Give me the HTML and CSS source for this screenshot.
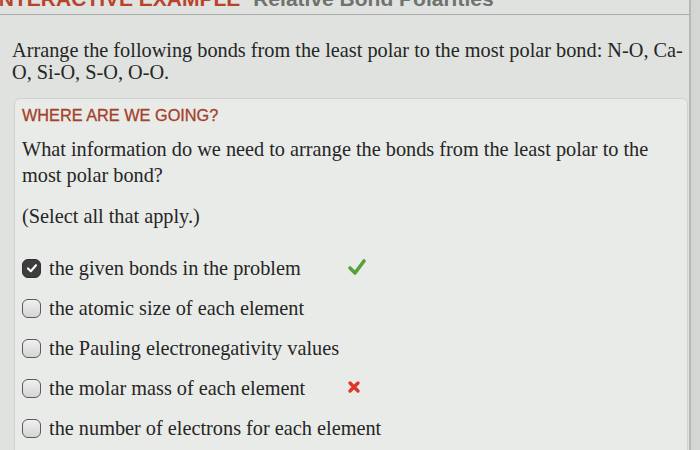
FILE: index.html
```html
<!DOCTYPE html>
<html>
<head>
<meta charset="utf-8">
<link rel="stylesheet" href="styles.css">
</head>
<body>
<div class="page">
  <div class="header">
    <div class="title"><span class="brand">INTERACTIVE EXAMPLE</span> <span class="topic">Relative Bond Polarities</span></div>
  </div>
  <div class="content">
    <p class="question">Arrange the following bonds from the least polar to the most polar bond: N-O, Ca-<br>O, Si-O, S-O, O-O.</p>
    <div class="box">
      <div class="box-title">WHERE ARE WE GOING?</div>
      <p class="prompt">What information do we need to arrange the bonds from the least polar to the most polar bond?</p>
      <p class="hint">(Select all that apply.)</p>
      <ul class="options">
        <li class="option">
          <span class="cb checked"><svg viewBox="0 0 20 20" width="20" height="20"><path d="M5 10.5 L8.5 14 L15 6.5" fill="none" stroke="#fff" stroke-width="2.6" stroke-linecap="round" stroke-linejoin="round"/></svg></span>
          <span class="label">the given bonds in the problem</span>
          <span class="mark"><svg viewBox="0 0 20 18" width="20" height="18"><path d="M3 10 L8 15 L17 3" fill="none" stroke="#5aa03a" stroke-width="3.6" stroke-linecap="round" stroke-linejoin="round"/></svg></span>
        </li>
        <li class="option">
          <span class="cb"></span>
          <span class="label">the atomic size of each element</span>
        </li>
        <li class="option">
          <span class="cb"></span>
          <span class="label">the Pauling electronegativity values</span>
        </li>
        <li class="option">
          <span class="cb"></span>
          <span class="label">the molar mass of each element</span>
          <span class="mark cross"><svg viewBox="0 0 14 14" width="14" height="14"><path d="M3 3 L11 11 M11 3 L3 11" fill="none" stroke="#e0352b" stroke-width="3.4" stroke-linecap="round"/></svg></span>
        </li>
        <li class="option">
          <span class="cb"></span>
          <span class="label">the number of electrons for each element</span>
        </li>
      </ul>
    </div>
  </div>
</div>
</body>
</html>
```
FILE: styles.css
```css
html, body {
  margin: 0;
  padding: 0;
  height: 100%;
  overflow: hidden;
}
body {
  background: #d3d6d3;
  font-family: "Liberation Serif", "Times New Roman", serif;
  color: #262626;
}
.page {
  width: 689px;
  height: 450px;
  background: #dfe2de;
  border-right: 2px solid #b4b7b4;
  overflow: hidden;
}
.header {
  height: 14px;
  border-bottom: 1px solid #a9acaa;
  overflow: hidden;
  display: flex;
  align-items: flex-end;
}
.title {
  font-family: "Liberation Sans", Arial, sans-serif;
  font-weight: bold;
  font-size: 21px;
  line-height: 21px;
  margin-bottom: 5px;
  margin-left: -7px;
  white-space: nowrap;
}
.brand { color: #b8432a; }
.topic { color: #6f7271; margin-left: 7px; }
.content {
  padding: 0 0 0 12px;
}
.question {
  margin: 24px 0 0 0;
  font-size: 20.3px;
  line-height: 22px;
  white-space: nowrap;
}
.box {
  margin: 15px 0 0 2px;
  width: 674px;
  height: 400px;
  background: #e9ebe8;
  border: 1px solid #cfd2cf;
  border-radius: 6px;
  padding: 6px 0 0 7px;
  box-sizing: border-box;
}
.box-title {
  font-family: "Liberation Sans", Arial, sans-serif;
  font-size: 16.3px;
  color: #a3412b;
  line-height: 20px;
  -webkit-text-stroke: 0.3px #a3412b;
}
.prompt {
  margin: 11px 0 0 0;
  font-size: 20.3px;
  line-height: 26px;
  width: 640px;
}
.hint {
  margin: 15px 0 0 0;
  font-size: 20.3px;
  line-height: 26px;
}
.options {
  list-style: none;
  margin: 19px 0 0 0;
  padding: 0;
}
.option {
  display: flex;
  align-items: center;
  height: 40px;
  font-size: 20.3px;
}
.cb {
  width: 17px;
  height: 17px;
  border: 1.5px solid #5a5a5a;
  border-radius: 6px;
  background: linear-gradient(#efefef, #d4d5d4);
  margin-right: 8px;
  flex: none;
  display: flex;
  align-items: center;
  justify-content: center;
}
.cb.checked {
  background: #3e3e3e;
  border-color: #2e2e2e;
}
.cb svg { width: 16px; height: 16px; }
.label {
  width: 298px;
  white-space: nowrap;
}
.mark {
  display: flex;
  margin-top: -2px;
}
.mark.cross { margin-left: 0; }
```
